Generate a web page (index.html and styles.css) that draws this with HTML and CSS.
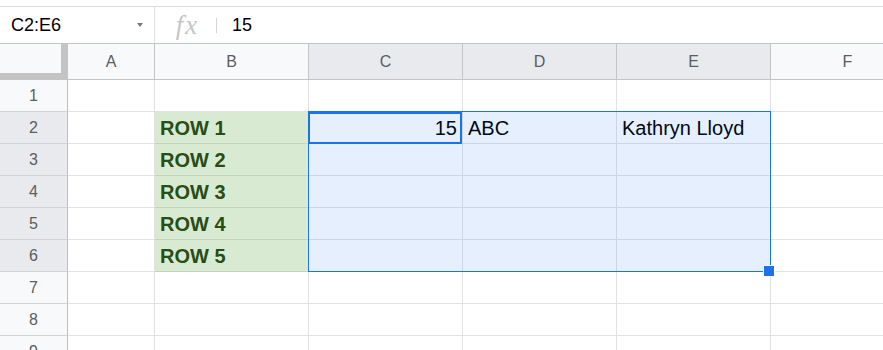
FILE: index.html
```html
<!DOCTYPE html>
<html lang="en">

<head>
  <meta charset="UTF-8">
  <meta name="viewport" content="width=device-width, initial-scale=1.0">
  <title>Sheet</title>

  <link rel="stylesheet" href="styles.css">
</head>

<body>
  <div class="top-gap"></div>

  <div class="formula-bar">
    <div class="name-box">
      <span>C2:E6</span>
      <span class="arrow"></span>
    </div>
    <div class="fx">fx</div>
    <div class="divider"></div>
    <div class="value">15</div>
  </div>

  <section class="grid">
    <!-- header row -->
    <div class="corner"></div>
    <div class="col-head">A</div>
    <div class="col-head">B</div>
    <div class="col-head sel">C</div>
    <div class="col-head sel">D</div>
    <div class="col-head sel">E</div>
    <div class="col-head">F</div>

    <!-- 1 -->
    <div class="row-head">1</div>
    <div class="cell"></div>
    <div class="cell"></div>
    <div class="cell"></div>
    <div class="cell"></div>
    <div class="cell"></div>
    <div class="cell"></div>

    <!-- 2 -->
    <div class="row-head sel">2</div>
    <div class="cell"></div>
    <div class="cell green">ROW 1</div>
    <div class="cell num">15</div>
    <div class="cell">ABC</div>
    <div class="cell">Kathryn Lloyd</div>
    <div class="cell"></div>

    <!-- 3 -->
    <div class="row-head sel">3</div>
    <div class="cell"></div>
    <div class="cell green">ROW 2</div>
    <div class="cell"></div>
    <div class="cell"></div>
    <div class="cell"></div>
    <div class="cell"></div>

    <!-- 4 -->
    <div class="row-head sel">4</div>
    <div class="cell"></div>
    <div class="cell green">ROW 3</div>
    <div class="cell"></div>
    <div class="cell"></div>
    <div class="cell"></div>
    <div class="cell"></div>

    <!-- 5 -->
    <div class="row-head sel">5</div>
    <div class="cell"></div>
    <div class="cell green">ROW 4</div>
    <div class="cell"></div>
    <div class="cell"></div>
    <div class="cell"></div>
    <div class="cell"></div>

    <!-- 6 -->
    <div class="row-head sel">6</div>
    <div class="cell"></div>
    <div class="cell green">ROW 5</div>
    <div class="cell"></div>
    <div class="cell"></div>
    <div class="cell"></div>
    <div class="cell"></div>

    <!-- 7 -->
    <div class="row-head">7</div>
    <div class="cell"></div>
    <div class="cell"></div>
    <div class="cell"></div>
    <div class="cell"></div>
    <div class="cell"></div>
    <div class="cell"></div>

    <!-- 8 -->
    <div class="row-head">8</div>
    <div class="cell"></div>
    <div class="cell"></div>
    <div class="cell"></div>
    <div class="cell"></div>
    <div class="cell"></div>
    <div class="cell"></div>

    <!-- 9 -->
    <div class="row-head">9</div>
    <div class="cell"></div>
    <div class="cell"></div>
    <div class="cell"></div>
    <div class="cell"></div>
    <div class="cell"></div>
    <div class="cell"></div>

    <!-- selection C2:E6 -->
    <div class="range"></div>
    <div class="active"></div>
    <div class="handle"></div>
  </section>
</body>

</html>
```

FILE: styles.css
```css
* {
  margin: 0;
  padding: 0;
  box-sizing: border-box;
}

body {
  width: 883px;
  height: 350px;
  overflow: hidden;
  background-color: #fff;
  font-family: "Liberation Sans", Arial, sans-serif;
  color: #000;
}

.top-gap {
  height: 7px;
  border-bottom: 1px solid #dadce0;
}

.formula-bar {
  height: 37px;
  display: flex;
  align-items: center;
  border-bottom: 1px solid #c4c4c4;
}

.name-box {
  width: 155px;
  height: 100%;
  display: flex;
  align-items: center;
  justify-content: space-between;
  padding: 0 11px 0 11px;
  border-right: 1px solid #e0e0e0;
  font-size: 18px;
  line-height: 36px;
}

.arrow {
  width: 0;
  height: 0;
  border-left: 3px solid transparent;
  border-right: 3px solid transparent;
  border-top: 4px solid #7a7a7a;
}

.fx {
  width: 61px;
  padding-left: 4px;
  text-align: center;
  font-family: "Liberation Serif", serif;
  font-style: italic;
  font-size: 27px;
  line-height: 36px;
  letter-spacing: 2px;
  color: #c6c6c6;
}

.divider {
  width: 1px;
  height: 15px;
  background-color: #d5d5d5;
}

.value {
  padding-left: 15px;
  font-size: 18px;
}

.grid {
  display: grid;
  grid-template-columns: 68px 87px 154px 154px 154px 154px 154px;
  grid-template-rows: 36px repeat(9, 32px);
  position: relative;
}

.grid > div {
  border-right: 1px solid #e2e2e2;
  border-bottom: 1px solid #e2e2e2;
}

.grid > .corner {
  background-color: #f8f9fa;
  border-right: 7px solid #c4c4c4;
  border-bottom: 7px solid #c4c4c4;
}

.grid > .col-head {
  display: flex;
  align-items: center;
  justify-content: center;
  background-color: #f8f9fa;
  border-right-color: #c4c4c4;
  border-bottom-color: #c4c4c4;
  font-size: 16px;
  color: #5a5d61;
}

.grid > .row-head {
  display: flex;
  align-items: center;
  justify-content: center;
  background-color: #f8f9fa;
  border-right-color: #bdbdbd;
  border-bottom-color: #d3d3d3;
  font-size: 16px;
  color: #5a5d61;
}

.grid > .sel {
  background-color: #e8eaed;
}

.cell {
  padding: 6px 5px 0 5px;
  font-size: 20px;
  line-height: 20px;
  white-space: nowrap;
}

.num {
  text-align: right;
}

.grid > .green {
  background-color: #d9ead3;
  border-bottom-color: rgba(0, 0, 0, 0.09);
  border-right-color: rgba(0, 0, 0, 0.09);
  color: #274e13;
  font-weight: bold;
}

.grid > .range {
  position: absolute;
  left: 308px;
  top: 67px;
  width: 463px;
  height: 161px;
  border: 1px solid #1a73e8;
  background-color: rgba(14, 101, 235, 0.1);
}

.grid > .active {
  position: absolute;
  left: 308px;
  top: 68px;
  width: 154px;
  height: 32px;
  border: 2px solid #1a73e8;
}

.grid > .handle {
  position: absolute;
  left: 763px;
  top: 221px;
  width: 12px;
  height: 12px;
  border: 1px solid #fff;
  background-color: #1a73e8;
}
```
